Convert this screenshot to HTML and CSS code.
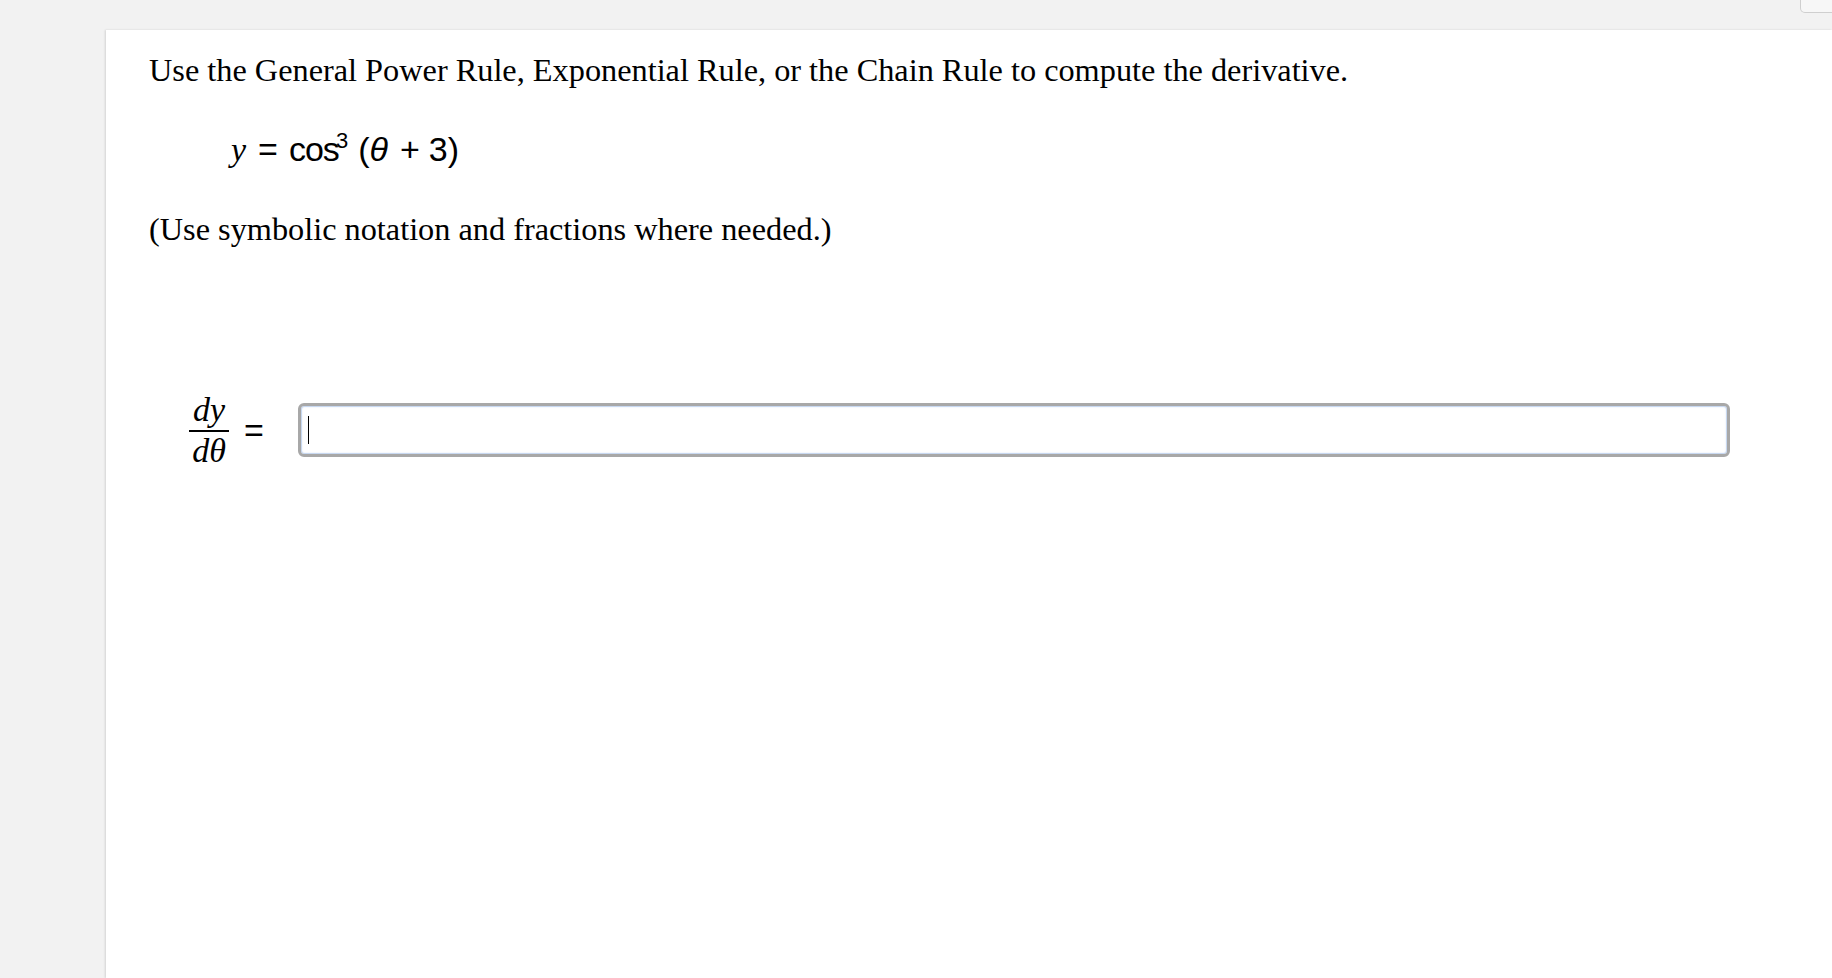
FILE: index.html
```html
<!DOCTYPE html>
<html>
<head>
<meta charset="utf-8">
<link rel="stylesheet" href="styles.css">
</head>
<body>
<div class="topbar"><div class="corner-btn"></div></div>
<div class="panel">
  <p class="question">Use the General Power Rule, Exponential Rule, or the Chain Rule to compute the derivative.</p>
  <div class="equation">
    <span class="var">y</span><span class="eq">=</span><span class="fn">cos</span><sup class="pow">3</sup><span class="paren">(</span><span class="theta">θ</span><span class="plus">+</span><span class="num">3</span><span class="paren close">)</span>
  </div>
  <p class="note">(Use symbolic notation and fractions where needed.)</p>
  <div class="answer-row">
    <div class="fraction">
      <span class="numer">dy</span>
      <span class="denom">dθ</span>
    </div>
    <span class="answer-eq">=</span>
    <div class="answer-box"><span class="caret"></span></div>
  </div>
</div>
</body>
</html>
```

FILE: styles.css
```css
html, body {
  margin: 0;
  padding: 0;
}
body {
  background: #f2f2f2;
  height: 978px;
  overflow: hidden;
  color: #000;
  font-family: "Liberation Serif", "Times New Roman", serif;
}
.topbar {
  height: 30px;
  display: flex;
  justify-content: flex-end;
  align-items: flex-start;
}
.corner-btn {
  width: 32px;
  height: 12px;
  margin-right: -2px;
  border: 1px solid #cfcfcf;
  border-top: none;
  border-radius: 0 0 0 5px;
  background: #f7f7f7;
}
.panel {
  margin-left: 106px;
  min-height: 948px;
  background: #fff;
  box-shadow: -1px 0 2px rgba(0, 0, 0, 0.13);
  padding: 21px 0 0 43px;
  box-sizing: border-box;
}
.question,
.note {
  margin: 0;
  font-size: 32.3px;
  line-height: 38px;
}
.equation {
  margin: 40px 0 0 82px;
  height: 40px;
  line-height: 40px;
  font-family: "Liberation Sans", Arial, sans-serif;
  font-size: 34px;
  white-space: nowrap;
}
.var {
  font-family: "Liberation Serif", serif;
  font-style: italic;
  font-size: 34px;
}
.eq {
  margin: 0 11px 0 12px;
}
.fn {
  letter-spacing: -1px;
}
.pow {
  font-size: 22px;
  vertical-align: 13px;
  line-height: 0;
  margin-left: -3px;
}
.paren {
  margin-left: 10px;
}
.paren.close {
  margin-left: 0;
}
.theta {
  font-style: italic;
}
.plus {
  margin: 0 9px 0 12px;
}
.note {
  margin-top: 41px;
}
.answer-row {
  margin: 155px 0 0 40px;
  display: flex;
  align-items: center;
  height: 54px;
}
.fraction {
  display: flex;
  flex-direction: column;
  align-items: center;
  font-style: italic;
  font-size: 34px;
  line-height: 31px;
  width: 40px;
}
.numer {
  padding-bottom: 5px;
}
.denom {
  border-top: 2px solid #000;
  align-self: stretch;
  text-align: center;
  padding-top: 3px;
}
.answer-eq {
  font-family: "Liberation Sans", Arial, sans-serif;
  font-size: 34px;
  margin: 0 34px 0 15px;
}
.answer-box {
  width: 1432px;
  height: 54px;
  box-sizing: border-box;
  border: 3px solid #a8a8a8;
  border-radius: 6px;
  box-shadow: inset 0 0 0 1px #c8d8f0, inset 0 0 2px 1px #dde8f7;
  background: #fff;
  display: flex;
  align-items: center;
  padding-left: 7px;
}
.caret {
  width: 1px;
  height: 28px;
  background: #000;
}
```
